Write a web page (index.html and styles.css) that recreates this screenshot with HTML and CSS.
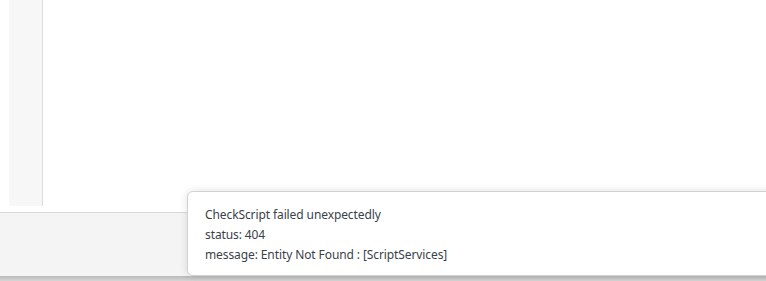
FILE: index.html
```html
<!DOCTYPE html>
<html>
<head>
<meta charset="utf-8">
<link rel="stylesheet" href="styles.css">
</head>
<body>
<div class="app">
  <div class="content">
    <div class="sidebar"></div>
    <div class="main"></div>
  </div>
  <div class="footer"></div>
  <div class="bottom"></div>
</div>
<div class="toast">
  <div class="line">CheckScript failed unexpectedly</div>
  <div class="line">status: 404</div>
  <div class="line">message: Entity Not Found : [ScriptServices]</div>
</div>
</body>
</html>
```
FILE: styles.css
```css
html, body {
  margin: 0;
  padding: 0;
  width: 766px;
  height: 281px;
  overflow: hidden;
  background: #ffffff;
  font-family: "Noto Sans", "Open Sans", sans-serif;
}
.app {
  display: flex;
  flex-direction: column;
  height: 281px;
}
.content {
  display: flex;
  height: 212px;
  padding-left: 9px;
}
.sidebar {
  width: 33px;
  height: 206px;
  background: #f7f7f7;
  border-right: 1px solid #dcdcdc;
}
.main {
  flex: 1;
}
.footer {
  height: 63px;
  background: #f4f4f4;
  border-top: 1px solid #dadada;
}
.bottom {
  flex: 1;
  background: linear-gradient(#b9b9b9, #d6d6d6);
}
.toast {
  position: absolute;
  left: 187px;
  top: 191px;
  width: 600px;
  height: 85px;
  box-sizing: border-box;
  background: #ffffff;
  border: 1px solid #d2d2d2;
  border-radius: 6px;
  box-shadow: 0 0 8px rgba(0, 0, 0, 0.12);
  padding: 13px 0 0 17px;
  color: #3a3f4a;
  font-size: 12px;
  letter-spacing: -0.1px;
}
.line {
  line-height: 20px;
  height: 20px;
}
```
